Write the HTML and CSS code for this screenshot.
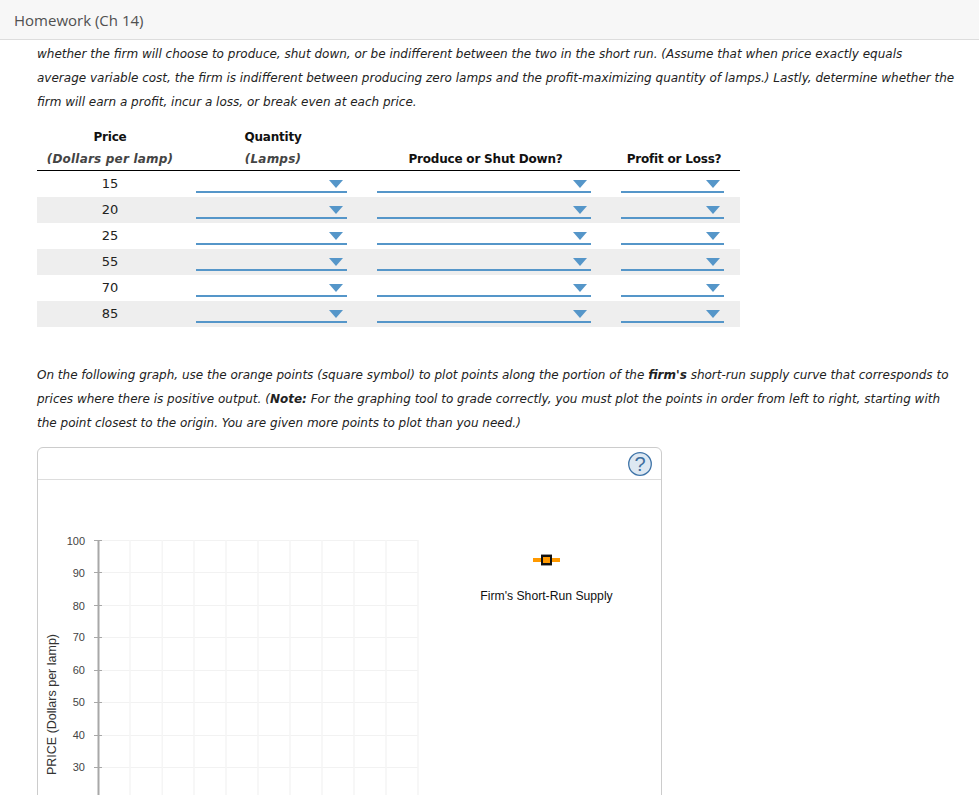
FILE: index.html
```html
<!DOCTYPE html>
<html lang="en">
<head>
    <meta charset="UTF-8">
    <meta name="viewport" content="width=device-width, initial-scale=1.0">
    <title>Homework (Ch 14)</title>
    <link rel="stylesheet" href="styles.css">
</head>
<body>

    <header class="top-bar">Homework (Ch 14)</header>

    <main class="content">
        <p class="question question-top">whether the firm will choose to produce, shut down, or be indifferent between the two in the short run. (Assume that when price exactly equals<br>average variable cost, the firm is indifferent between producing zero lamps and the profit-maximizing quantity of lamps.) Lastly, determine whether the<br>firm will earn a profit, incur a loss, or break even at each price.</p>

        <table class="answer-table">
            <colgroup>
                <col class="col-price">
                <col class="col-qty">
                <col class="col-shut">
                <col class="col-profit">
            </colgroup>
            <thead>
                <tr>
                    <th>Price<br><em>(Dollars per lamp)</em></th>
                    <th>Quantity<br><em>(Lamps)</em></th>
                    <th>Produce or Shut Down?</th>
                    <th>Profit or Loss?</th>
                </tr>
            </thead>
            <tbody>
                <tr>
                    <td>15</td>
                    <td><div class="drop drop-qty"></div></td>
                    <td><div class="drop drop-shut"></div></td>
                    <td><div class="drop drop-profit"></div></td>
                </tr>
                <tr>
                    <td>20</td>
                    <td><div class="drop drop-qty"></div></td>
                    <td><div class="drop drop-shut"></div></td>
                    <td><div class="drop drop-profit"></div></td>
                </tr>
                <tr>
                    <td>25</td>
                    <td><div class="drop drop-qty"></div></td>
                    <td><div class="drop drop-shut"></div></td>
                    <td><div class="drop drop-profit"></div></td>
                </tr>
                <tr>
                    <td>55</td>
                    <td><div class="drop drop-qty"></div></td>
                    <td><div class="drop drop-shut"></div></td>
                    <td><div class="drop drop-profit"></div></td>
                </tr>
                <tr>
                    <td>70</td>
                    <td><div class="drop drop-qty"></div></td>
                    <td><div class="drop drop-shut"></div></td>
                    <td><div class="drop drop-profit"></div></td>
                </tr>
                <tr>
                    <td>85</td>
                    <td><div class="drop drop-qty"></div></td>
                    <td><div class="drop drop-shut"></div></td>
                    <td><div class="drop drop-profit"></div></td>
                </tr>
            </tbody>
        </table>

        <p class="question graph-intro">On the following graph, use the orange points (square symbol) to plot points along the portion of the <strong>firm's</strong> short-run supply curve that corresponds to prices where there is positive output. (<strong>Note:</strong> For the graphing tool to grade correctly, you must plot the points in order from left to right, starting with the point closest to the origin. You are given more points to plot than you need.)</p>

        <section class="graph-box">
            <div class="graph-head">
                <svg class="help-icon" width="24" height="24" viewBox="0 0 24 24">
                    <circle cx="12" cy="12" r="11.300" fill="#dde8f2" stroke="#3f74a8" stroke-width="1.300"/>
                    <text x="12" y="19" text-anchor="middle" class="help-mark">?</text>
                </svg>
            </div>
            <svg class="graph" width="623" height="500" viewBox="0 0 623 500">
                <g class="grid">
                    <path class="grid-rows" d="M61 60.500H380M61 92.500H380M61 125.500H380M61 157.500H380M61 190.500H380M61 222.500H380M61 255.500H380M61 287.500H380"/>
                    <path class="grid-cols" d="M92 60V500M124.300 60V500M156 60V500M188 60V500M220 60V500M252 60V500M284 60V500M316 60V500M348 60V500M380 60V500"/>
                </g>
                <path class="axis" d="M60.500 60V500"/>
                <path class="tick" d="M56 60.500H64M56 92.500H64M56 125.500H64M56 157.500H64M56 190.500H64M56 222.500H64M56 255.500H64M56 287.500H64"/>
                <g class="tick-labels">
                    <text x="47" y="64.500">100</text>
                    <text x="47" y="96.500">90</text>
                    <text x="47" y="129.500">80</text>
                    <text x="47" y="161">70</text>
                    <text x="47" y="194">60</text>
                    <text x="47" y="226">50</text>
                    <text x="47" y="259">40</text>
                    <text x="47" y="291">30</text>
                </g>
                <text class="axis-title" transform="translate(18 295) rotate(-90)">PRICE (Dollars per lamp)</text>

                <path class="legend-line" d="M495 80H522"/>
                <path class="legend-halo" d="M503 74.500H514M503 85.500H514"/>
                <rect class="legend-point" x="504" y="76" width="9" height="8"/>
                <text class="legend-label" x="508.500" y="120">Firm's Short-Run Supply</text>
            </svg>
        </section>
    </main>

</body>
</html>
```

FILE: styles.css
```css
html, body {
    height: 795px;
    overflow: hidden;
}

body {
    margin: 0;
    padding: 0;
    background-color: white;
    color: #222;
    font-family: "DejaVu Sans", Verdana, sans-serif;
    font-size: 12px;
}

.top-bar {
    height: 39px;
    padding-left: 14px;
    background-color: #f7f7f7;
    border-bottom: 1px solid #ddd;
    color: #505050;
    font-family: "Open Sans", sans-serif;
    font-size: 15px;
    line-height: 41px;
}

.content {
    padding: 2px 20px 0 37px;
}

.question {
    margin: 0;
    font-style: italic;
    line-height: 24px;
}

.question-top {
    white-space: nowrap;
}

/* Answer table */
.answer-table {
    width: 703px;
    margin-top: 11px;
    border-collapse: collapse;
    table-layout: fixed;
}

.col-price { width: 146px; }
.col-qty { width: 178px; }
.col-shut { width: 245px; }
.col-profit { width: 134px; }

.answer-table th {
    height: 45px;
    padding: 0;
    border-bottom: 1px solid black;
    color: #111;
    font-weight: bold;
    letter-spacing: -0.2px;
    line-height: 22px;
    text-align: center;
    vertical-align: bottom;
}

.answer-table th:nth-child(2),
.answer-table th:nth-child(4) {
    padding-left: 2px;
}

.answer-table th:nth-child(3) {
    padding-left: 4px;
}

.answer-table th em {
    color: #444;
    letter-spacing: 0.2px;
}

.answer-table td {
    box-sizing: border-box;
    height: 26px;
    padding: 0 0 2px;
    font-size: 13px;
    text-align: center;
}

.answer-table tbody tr:nth-child(even) {
    background-color: #eee;
}

.drop {
    position: relative;
    height: 20px;
    border-bottom: 2px solid #5596c9;
    margin-bottom: 2px;
}

.drop::after {
    content: "";
    position: absolute;
    right: 4px;
    top: 9px;
    border-top: 8px solid #5596c9;
    border-left: 7px solid transparent;
    border-right: 7px solid transparent;
}

.drop-qty { width: 151px; margin-left: 13px; }
.drop-shut { width: 214px; margin-left: 16px; }
.drop-profit { width: 103px; margin-left: 15px; }

.graph-intro {
    margin-top: 36px;
    width: 925px;
}

/* Graph panel */
.graph-box {
    width: 623px;
    height: 500px;
    margin-top: 12px;
    border: 1px solid #ccc;
    border-radius: 6px 6px 0 0;
}

.graph-head {
    display: flex;
    justify-content: flex-end;
    align-items: center;
    height: 31px;
    padding-right: 9px;
    border-bottom: 1px solid #ddd;
}

.help-mark {
    fill: #3f6f9f;
    font-family: "Liberation Sans", Arial, sans-serif;
    font-size: 20px;
}

.graph {
    display: block;
    font-family: "Liberation Sans", Arial, sans-serif;
}

.grid-rows,
.grid-cols {
    fill: none;
    stroke: #f2f2f2;
    stroke-width: 1;
}

.grid-cols {
    stroke: #f5f5f5;
    stroke-width: 1.500;
}

.axis {
    stroke: #a8a8a8;
    stroke-width: 2;
}

.tick {
    stroke: #a8a8a8;
    stroke-width: 1;
}

.tick-labels text {
    fill: #444;
    font-size: 11px;
    text-anchor: end;
}

.axis-title {
    fill: #333;
    font-size: 12.500px;
}

.legend-line {
    stroke: #ff9900;
    stroke-width: 4;
}

.legend-halo {
    fill: none;
    stroke: #999;
    stroke-width: 1;
}

.legend-point {
    fill: #ff9900;
    stroke: #111;
    stroke-width: 2;
}

.legend-label {
    fill: #111;
    font-size: 12.200px;
    text-anchor: middle;
}
```
